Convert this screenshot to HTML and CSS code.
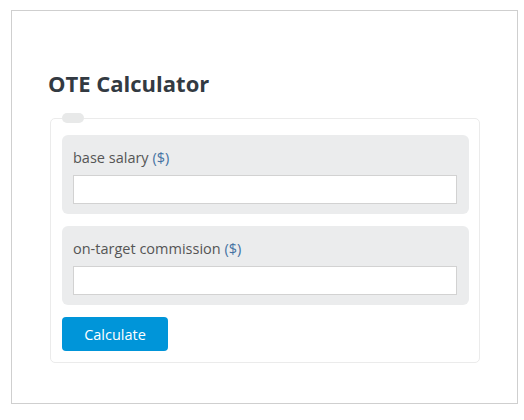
FILE: index.html
```html
<!DOCTYPE html>
<html>
<head>
<meta charset="utf-8">
<link rel="stylesheet" href="styles.css">
</head>
<body>
<div class="frame">
  <h1 class="title">OTE Calculator</h1>
  <div class="panel">
    <span class="legend"></span>
    <div class="field">
      <label class="label">base salary <span class="unit">($)</span></label>
      <input class="input" type="text">
    </div>
    <div class="field">
      <label class="label">on-target commission <span class="unit">($)</span></label>
      <input class="input" type="text">
    </div>
    <button class="btn">Calculate</button>
  </div>
</div>
</body>
</html>
```
FILE: styles.css
```css
html, body { margin: 0; padding: 0; background: #fff; }
body { font-family: "Open Sans", "Noto Sans", sans-serif; }
.frame {
  box-sizing: border-box;
  margin: 10px 0 0 11px;
  width: 507px;
  height: 394px;
  border: 1px solid #cfcfcf;
  padding: 57px 0 0 38px;
}
.title {
  margin: 0 0 20px -2px;
  font-size: 22px;
  line-height: 30px;
  font-weight: 700;
  color: #333a42;
}
.panel {
  position: relative;
  box-sizing: border-box;
  width: 430px;
  height: 245px;
  border: 1px solid #ebebeb;
  border-radius: 5px;
  padding: 16px 10px 0 11px;
  display: flex;
  flex-direction: column;
  gap: 12px;
}
.legend {
  position: absolute;
  left: 11px;
  top: -6px;
  width: 22px;
  height: 10px;
  border-radius: 5px;
  background: #e8e9e9;
}
.field {
  box-sizing: border-box;
  height: 79px;
  background: #ebeced;
  border-radius: 6px;
  padding: 12px 11px 10px 11px;
  display: flex;
  flex-direction: column;
  gap: 6px;
}
.label {
  font-size: 14.5px;
  line-height: 22px;
  color: #555;
}
.unit { color: #4472a3; }
.input {
  box-sizing: border-box;
  height: 30px;
  width: 384px;
  margin: 0;
  border: 1px solid #d2d2d2;
  background: #fff;
  outline: none;
}
.btn {
  box-sizing: border-box;
  width: 106px;
  height: 34px;
  border: none;
  border-radius: 4px;
  background: #0095d9;
  color: #fff;
  font-family: "Open Sans", "Noto Sans", sans-serif;
  font-size: 14.5px;
  padding: 0;
}
```
